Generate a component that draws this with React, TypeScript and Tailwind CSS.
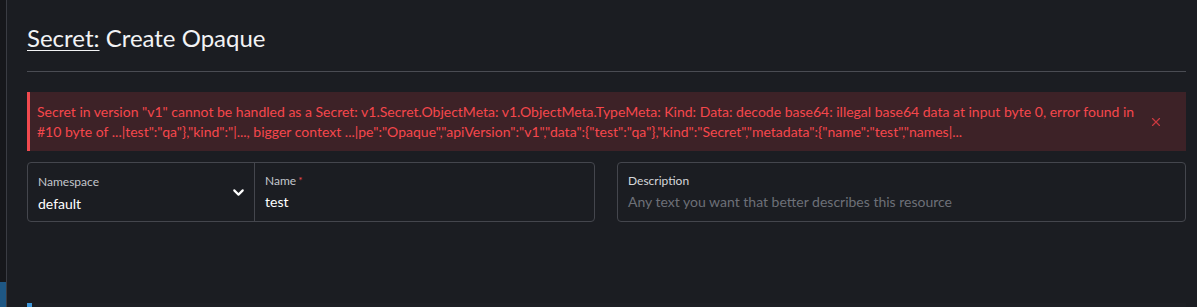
import { ChevronDown, X } from 'lucide-react'

const errorText =
  'Secret in version "v1" cannot be handled as a Secret: v1.Secret.ObjectMeta: v1.ObjectMeta.TypeMeta: Kind: Data: decode base64: illegal base64 data at input byte 0, error found in #10 byte of ...|test":"qa"},"kind":"|..., bigger context ...|pe":"Opaque","apiVersion":"v1","data":{"test":"qa"},"kind":"Secret","metadata":{"name":"test","names|...'

export default function App() {
  return (
    <div
      className="flex h-[307px] w-[1197px] overflow-hidden bg-[#1b1d22] text-white"
      style={{ fontFamily: 'Lato, "Liberation Sans", sans-serif' }}
    >
      {/* side nav edge */}
      <div className="flex w-[6px] flex-col bg-[#16171b]">
        <div className="flex-1" />
        <div className="h-[25px] bg-[#1e5784]" />
      </div>
      <div className="w-px bg-[#3a3c43]" />

      <div className="flex flex-1 flex-col pl-[20px] pr-[11px]">
        {/* header */}
        <div className="border-b border-[#4a4c53] pt-[23px] pb-[19px]">
          <h1 className="text-[24px] leading-[29px] text-[#f2f3f5]">
            <span className="underline decoration-1 underline-offset-[3px]">Secret:</span> Create Opaque
          </h1>
        </div>

        {/* error banner */}
        <div className="mt-[20px] flex h-[59px] items-center border-l-[3px] border-[#f04a4f] bg-[#3d2227] pl-[7px] pr-[23px]">
          <p className="flex-1 text-[14px] leading-[20px] text-[#f5474c]">{errorText}</p>
          <X className="ml-[8px] h-[14px] w-[14px] text-[#c9393f]" strokeWidth={2} />
        </div>

        {/* form row */}
        <div className="mt-[11px] flex gap-[22px]">
          <div className="flex h-[60px] w-[568px] rounded-[4px] border border-[#44464d]">
            <div className="flex w-[227px] items-center border-r border-[#44464d] pl-[10px] pr-[7px]">
              <div className="flex-1 pt-[3px]">
                <div className="text-[12px] leading-[15px] text-[#c3c6cc]">Namespace</div>
                <div className="mt-[6px] text-[14px] leading-[18px] text-white">default</div>
              </div>
              <ChevronDown className="h-[17px] w-[17px] text-white" strokeWidth={3} />
            </div>
            <div className="flex-1 pl-[10px] pt-[10px]">
              <div className="text-[12px] leading-[15px] text-[#c3c6cc]">
                Name<span className="ml-[2px] align-top text-[10px] text-[#f04a4f]">*</span>
              </div>
              <div className="mt-[5px] text-[14px] leading-[18px] text-white">test</div>
            </div>
          </div>
          <div className="h-[60px] flex-1 rounded-[4px] border border-[#44464d] pl-[10px] pt-[10px]">
            <div className="text-[12px] leading-[15px] text-[#d5d7db]">Description</div>
            <div className="mt-[5px] text-[14px] leading-[18px] text-[#6d7078]">
              Any text you want that better describes this resource
            </div>
          </div>
        </div>

        <div className="flex-1" />
        {/* start of next section */}
        <div className="flex h-[4px] bg-[#1d1f24]">
          <div className="w-[5px] bg-[#3d95d8]" />
        </div>
      </div>
    </div>
  )
}
